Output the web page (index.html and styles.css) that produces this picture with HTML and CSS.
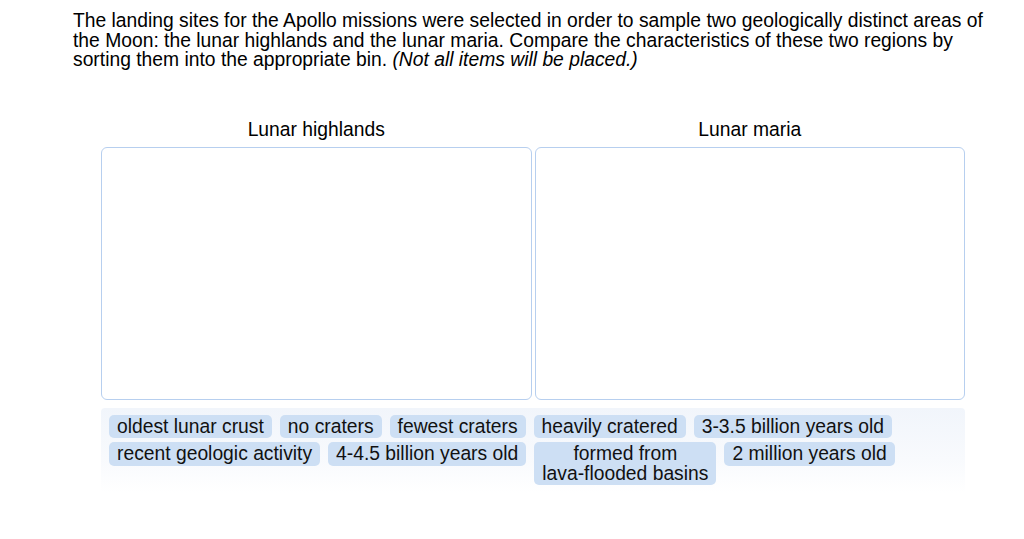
FILE: index.html
```html
<!DOCTYPE html>
<html>
<head>
<meta charset="utf-8">
<link rel="stylesheet" href="styles.css">
</head>
<body>
<div class="page">
  <p class="prompt">The landing sites for the Apollo missions were selected in order to sample two geologically distinct areas of the Moon: the lunar highlands and the lunar maria. Compare the characteristics of these two regions by sorting them into the appropriate bin. <em>(Not all items will be placed.)</em></p>
  <div class="sorter">
    <div class="bins">
      <div class="bin">
        <div class="bin-label">Lunar highlands</div>
        <div class="bin-box"></div>
      </div>
      <div class="bin">
        <div class="bin-label">Lunar maria</div>
        <div class="bin-box"></div>
      </div>
    </div>
    <div class="pool">
      <span class="chip">oldest lunar crust</span>
      <span class="chip">no craters</span>
      <span class="chip">fewest craters</span>
      <span class="chip">heavily cratered</span>
      <span class="chip">3-3.5 billion years old</span>
      <span class="chip">recent geologic activity</span>
      <span class="chip">4-4.5 billion years old</span>
      <span class="chip">formed from<br>lava-flooded basins</span>
      <span class="chip">2 million years old</span>
    </div>
  </div>
</div>
</body>
</html>
```
FILE: styles.css
```css
html, body {
  margin: 0;
  padding: 0;
  background: #ffffff;
}
body {
  font-family: "Liberation Sans", Arial, sans-serif;
  color: #000;
}
.page {
  padding: 11px 0 0 73px;
}
.prompt {
  margin: 0;
  width: 930px;
  font-size: 19.3px;
  line-height: 19.5px;
}
.prompt em {
  font-style: italic;
}
.sorter {
  margin: 50px 0 0 28px;
  width: 864px;
}
.bins {
  display: flex;
  gap: 3px;
}
.bin {
  flex: 1;
  display: flex;
  flex-direction: column;
  gap: 7px;
}
.bin-label {
  text-align: center;
  font-size: 19.3px;
  line-height: 20px;
}
.bin-box {
  height: 251px;
  border: 1px solid #b7cfef;
  border-radius: 6px;
  background: #fff;
}
.pool {
  margin-top: 8px;
  padding: 7px 8px 8px;
  display: flex;
  flex-wrap: wrap;
  align-items: flex-start;
  gap: 4px 8px;
  background: linear-gradient(to bottom, #f1f5fb 0%, #f8fafd 60%, #ffffff 100%);
  border-radius: 4px;
}
.chip {
  display: inline-block;
  background: #cddff4;
  border-radius: 5px;
  padding: 2px 8px 2px;
  font-size: 19.3px;
  line-height: 19.5px;
  text-align: center;
  color: #111;
}
```
